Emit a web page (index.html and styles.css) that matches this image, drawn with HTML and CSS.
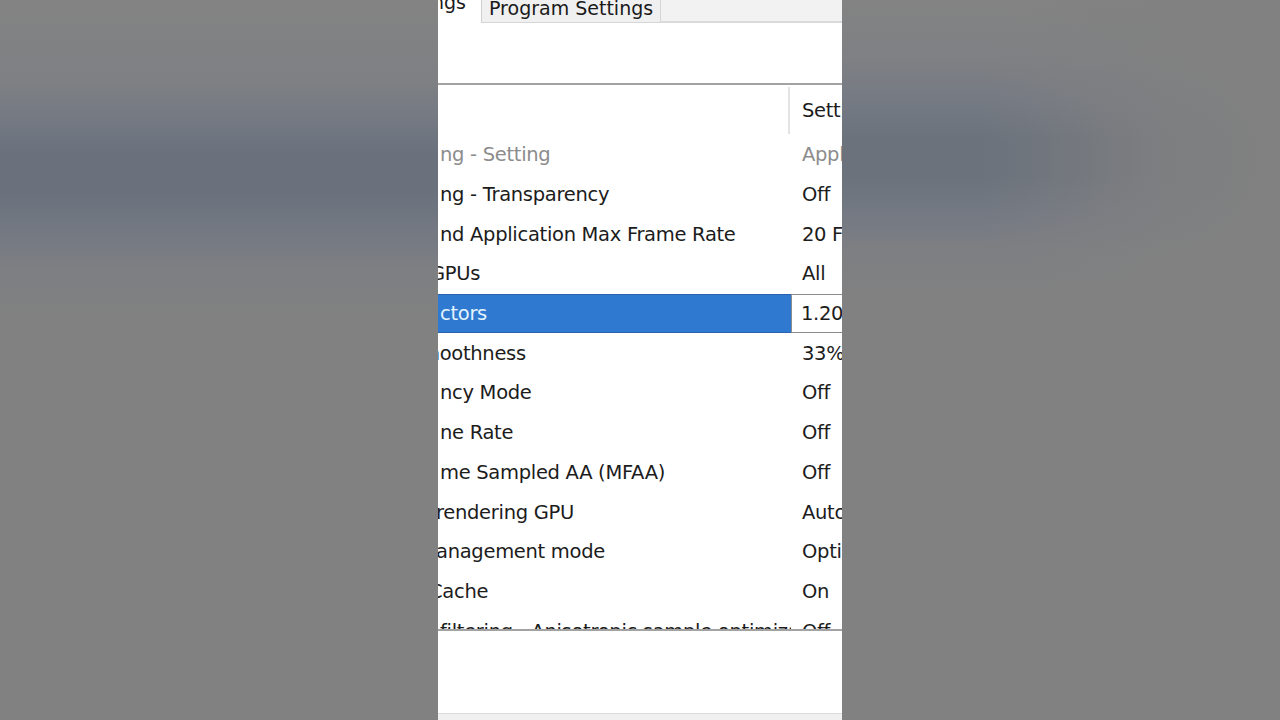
FILE: index.html
```html
<!DOCTYPE html>
<html lang="en">
<head>
<meta charset="utf-8">
<title>NVIDIA Control Panel - Manage 3D settings</title>
<link rel="stylesheet" href="styles.css">
</head>
<body>
<div class="stage">
  <div class="backdrop left"></div>
  <main class="panel">
    <div class="tabs">
      <div class="tab active"><span>ngs</span></div>
      <div class="tab">Program Settings</div>
      <div class="tab-fill"></div>
    </div>
    <div class="blank"></div>
    <section class="list">
      <div class="head">
        <div class="hname"></div>
        <div class="hval">Setting</div>
      </div>
      <div class="row disabled"><div class="name"><span>ng - Setting</span></div><div class="val">Application-controlled</div></div>
      <div class="row"><div class="name"><span>ng - Transparency</span></div><div class="val">Off</div></div>
      <div class="row"><div class="name"><span>nd Application Max Frame Rate</span></div><div class="val">20 FPS</div></div>
      <div class="row"><div class="name"><span class="cut-g">GPUs</span></div><div class="val">All</div></div>
      <div class="row sel"><div class="name"><span>ctors</span></div><div class="val">1.20x</div></div>
      <div class="row"><div class="name"><span class="cut-m">moothness</span></div><div class="val">33%</div></div>
      <div class="row"><div class="name"><span>ncy Mode</span></div><div class="val">Off</div></div>
      <div class="row"><div class="name"><span>ne Rate</span></div><div class="val">Off</div></div>
      <div class="row"><div class="name"><span>me Sampled AA (MFAA)</span></div><div class="val">Off</div></div>
      <div class="row"><div class="name"><span class="cut-r">rendering GPU</span></div><div class="val">Auto-select</div></div>
      <div class="row"><div class="name"><span class="cut-a">anagement mode</span></div><div class="val">Optimal power</div></div>
      <div class="row"><div class="name"><span class="cut-c">Cache</span></div><div class="val">On</div></div>
      <div class="row last"><div class="name"><span>filtering - Anisotropic sample optimization</span></div><div class="val">Off</div></div>
    </section>
    <div class="blank-bottom"></div>
    <div class="footer"></div>
  </main>
  <div class="backdrop right"></div>
</div>
</body>
</html>
```

FILE: styles.css
```css
* { box-sizing: border-box; }

html, body {
  margin: 0;
  padding: 0;
  width: 1280px;
  height: 720px;
  overflow: hidden;
}

body {
  font-family: "DejaVu Sans", Verdana, sans-serif;
  color: #1c1c1c;
  background: #818181;
}

.stage {
  display: grid;
  grid-template-columns: 438px 404px 1fr;
  height: 720px;
}

.backdrop {
  height: 720px;
}

.backdrop.left {
  background:
    linear-gradient(180deg,
      #838383 0px,
      #7e8083 80px,
      #747983 120px,
      #6a717c 155px,
      #6a717c 190px,
      #737882 230px,
      #7d7f82 270px,
      #818181 320px,
      #818181 720px);
}

.backdrop.right {
  background:
    linear-gradient(90deg, rgba(129,129,129,0) 0px, rgba(129,129,129,0) 140px, rgba(129,129,129,0.8) 320px, #818181 438px),
    linear-gradient(180deg,
      #838383 0px,
      #7e8083 60px,
      #757a83 100px,
      #6b727c 140px,
      #6b727c 175px,
      #747983 215px,
      #7d7f82 250px,
      #818181 300px,
      #818181 720px);
}

.panel {
  display: flex;
  flex-direction: column;
  height: 720px;
  background: #ffffff;
  overflow: hidden;
}

/* tab strip */
.tabs {
  display: flex;
  height: 23px;
  flex: none;
}

.tab {
  font-size: 19px;
  line-height: 16px;
  height: 23px;
  white-space: nowrap;
  color: #1a1a1a;
}

.tab.active {
  width: 43px;
  background: #ffffff;
  overflow: hidden;
}

.tab.active span {
  display: block;
  margin-top: -6px;
  margin-left: -6px;
}

.tab:not(.active) {
  width: 180px;
  padding-left: 7px;
  background: #f0f0f0;
  border-left: 1px solid #cfcfcf;
  border-right: 1px solid #d6d6d6;
  border-bottom: 1px solid #d6d6d6;
}

.tab-fill {
  flex: 1;
  background: #f2f2f2;
  border-bottom: 2px solid #dadada;
}

.blank {
  height: 60px;
  flex: none;
}

/* list */
.list {
  flex: none;
  height: 548px;
  border-top: 2px solid #a3a3a3;
  border-bottom: 2px solid #a3a3a3;
  overflow: hidden;
  font-size: 19.5px;
  letter-spacing: -0.3px;
}

.head {
  display: grid;
  grid-template-columns: 352px 1fr;
  height: 50px;
  align-items: center;
}

.hname {
  height: 47px;
  align-self: start;
  margin-top: 2px;
  border-right: 2px solid #e4e4e4;
}

.hval {
  padding-left: 12px;
  white-space: nowrap;
}

.row {
  display: grid;
  grid-template-columns: 353px 1fr;
  height: 39.7px;
  align-items: stretch;
}

.name, .val {
  display: flex;
  align-items: center;
  white-space: nowrap;
  overflow: hidden;
}

.name {
  padding-left: 2px;
}

.name span {
  flex: none;
}

.val {
  padding-left: 11px;
}

.cut-g { margin-left: -10px; }
.cut-m { margin-left: -19px; }
.cut-r { margin-left: -4px; }
.cut-a { margin-left: -4px; }
.cut-c { margin-left: -11px; }

.row.disabled .name,
.row.disabled .val {
  color: #8c8c8c;
}

.row.sel .name {
  background: #3079d0;
  color: #e2f3ff;
  border-top: 1px solid #2a62b0;
  border-bottom: 1px solid #2a62b0;
}

.row.sel .val {
  background: #ffffff;
  border-top: 1px solid #8e8e8e;
  border-bottom: 1px solid #8e8e8e;
  border-left: 1px solid #8e8e8e;
  padding-left: 9px;
}

.blank-bottom {
  flex: 1;
}

.footer {
  height: 7px;
  flex: none;
  background: #f0f0f0;
  border-top: 1px solid #dcdcdc;
}
```
